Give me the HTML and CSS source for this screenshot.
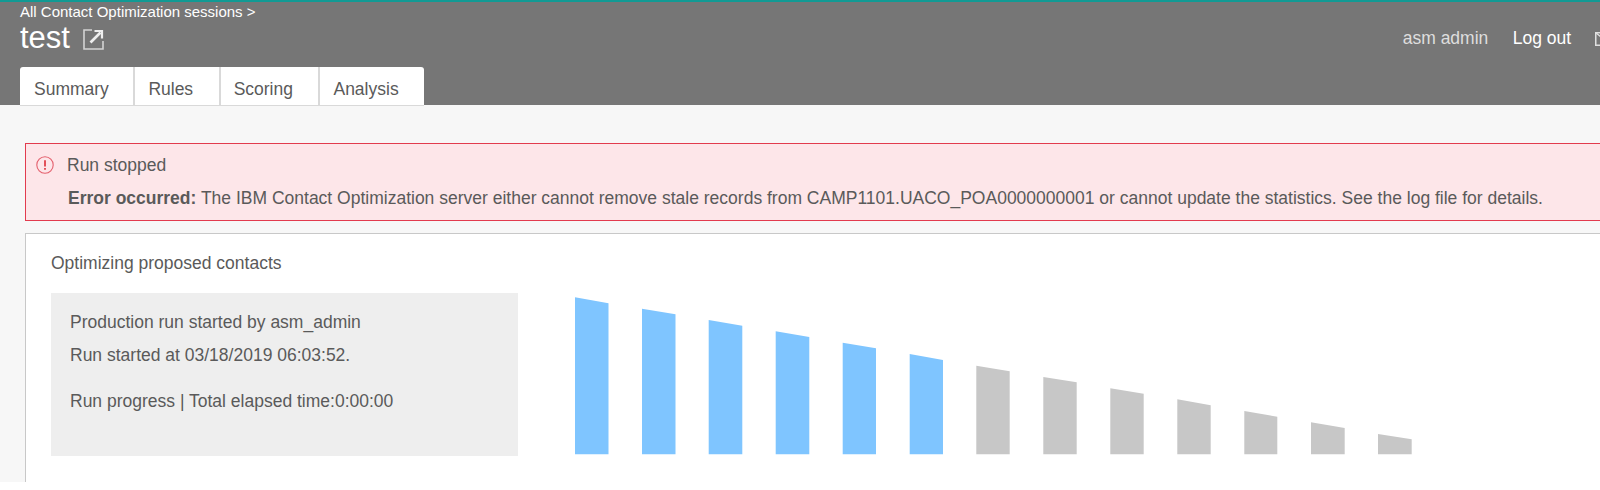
FILE: index.html
```html
<!DOCTYPE html>
<html lang="en">
<head>
<meta charset="utf-8">
<title>test</title>
<link rel="stylesheet" href="styles.css">
</head>
<body>
<header class="header">
  <div class="header-top">
    <div class="title-block">
      <a class="crumb">All Contact Optimization sessions &gt;</a>
      <div class="title-row">
        <h1 class="title">test</h1>
        <svg class="ext-icon" width="21" height="21" viewBox="0 0 21 21" fill="none" stroke="#d4d4d4">
          <path d="M9 1H1V20H20V12" stroke-width="1.6"/>
          <path d="M7.500 13.500L17.500 3.500" stroke="#eeeeee" stroke-width="2.6"/>
          <path d="M11.500 2H19V9.500" stroke="#eeeeee" stroke-width="2.200"/>
        </svg>
      </div>
    </div>
    <div class="user-block">
      <span class="user">asm admin</span>
      <a class="logout">Log out</a>
      <svg class="mail-icon" width="20" height="14" viewBox="0 0 20 14" fill="none" stroke="#e0e0e0" stroke-width="1.500">
        <rect x="0.750" y="0.750" width="18.500" height="12.500"/>
        <path d="M0.750 0.750L10 8L19.250 0.750"/>
      </svg>
    </div>
  </div>
  <nav class="tabs">
    <a class="tab">Summary</a>
    <a class="tab">Rules</a>
    <a class="tab">Scoring</a>
    <a class="tab">Analysis</a>
  </nav>
</header>
<main class="content">
  <section class="alert">
    <div class="alert-head">
      <svg class="alert-icon" width="18" height="18" viewBox="0 0 18 18" fill="none">
        <circle cx="9" cy="9" r="8.2" stroke="#e4606d" stroke-width="1.1"/>
        <path d="M9 4.200V10.600" stroke="#da1e28" stroke-width="1.500"/>
        <path d="M9 12V13.800" stroke="#da1e28" stroke-width="1.500"/>
      </svg>
      <span>Run stopped</span>
    </div>
    <p class="alert-body"><b>Error occurred:</b> The IBM Contact Optimization server either cannot remove stale records from CAMP1101.UACO_POA0000000001 or cannot update the statistics. See the log file for details.</p>
  </section>
  <section class="panel">
    <h2 class="panel-title">Optimizing proposed contacts</h2>
    <div class="panel-body">
      <div class="info">
        <p class="info-line">Production run started by asm_admin</p>
        <p class="info-line">Run started at 03/18/2019 06:03:52.</p>
        <p class="info-line progress">Run progress | Total elapsed time:0:00:00</p>
      </div>
      <svg class="chart" width="860" height="170" viewBox="0 0 860 170">
        <g fill="#7fc5ff">
          <polygon points="0,7.300 33.500,13.300 33.500,164.300 0,164.300"/>
          <polygon points="67,18.700 100.500,24.300 100.500,164.300 67,164.300"/>
          <polygon points="133.700,30 167.300,35.700 167.300,164.300 133.700,164.300"/>
          <polygon points="200.700,41.300 234.300,47 234.300,164.300 200.700,164.300"/>
          <polygon points="267.700,52.700 301,58.300 301,164.300 267.700,164.300"/>
          <polygon points="334.700,64 368,70 368,164.300 334.700,164.300"/>
        </g>
        <g fill="#c7c7c7">
          <polygon points="401.300,75.700 434.700,81.300 434.700,164.300 401.300,164.300"/>
          <polygon points="468.300,87 501.700,92.300 501.700,164.300 468.300,164.300"/>
          <polygon points="535.300,98.300 568.700,103.700 568.700,164.300 535.300,164.300"/>
          <polygon points="602.300,109.300 635.700,115.300 635.700,164.300 602.300,164.300"/>
          <polygon points="669.300,121 702.300,126.700 702.300,164.300 669.300,164.300"/>
          <polygon points="736,132.300 769.700,138 769.700,164.300 736,164.300"/>
          <polygon points="803,144 836.700,149.300 836.700,164.300 803,164.300"/>
        </g>
      </svg>
    </div>
  </section>
</main>
</body>
</html>
```
FILE: styles.css
```css
* { box-sizing: border-box; }
html, body { margin: 0; padding: 0; height: 100%; overflow: hidden; }
body {
  width: 1600px;
  background: #fff;
  font-family: "Liberation Sans", Arial, sans-serif;
  font-size: 17.500px;
  color: #5a5a5a;
}
p, h1, h2 { margin: 0; font-weight: normal; }

.header {
  height: 105px;
  background: #767676;
  border-top: 2px solid #119a94;
  padding-left: 20px;
  display: flex;
  flex-direction: column;
}
.header-top { display: flex; justify-content: space-between; height: 65px; flex: none; }
.title-block { display: flex; flex-direction: column; }
.crumb { color: #fff; font-size: 15px; line-height: 20px; }
.title-row { display: flex; align-items: center; gap: 13px; margin-top: -1px; }
.title { color: #fff; font-size: 31px; line-height: 34px; }
.ext-icon { margin-top: 2px; }
.user-block { display: flex; align-items: flex-start; width: 197.300px; flex: none; padding-top: 26px; line-height: 20px; white-space: nowrap; }
.user { color: #dedede; margin-right: 24.500px; }
.logout { color: #fff; margin-right: 23.500px; }
.mail-icon { margin-top: 4px; flex: none; }

.tabs { display: flex; position: relative; flex: none; }
.tab {
  height: 39px;
  padding: 12px 25.500px 0 13px;
  background: #fff;
  border-right: 2px solid #d9d9d9;
  border-bottom: 1px solid #d9d9d9;
  line-height: 20px;
  color: #5a5a5a;
}
.tab:first-child { padding-left: 14px; padding-right: 24.500px; border-top-left-radius: 3px; }
.tab:last-child { border-right: 0; border-top-right-radius: 3px; }

.content { height: 377px; overflow: hidden; background: #f7f7f7; padding: 38px 0 0 25px; }
.alert {
  height: 78px;
  background: #fde6e9;
  border: 1px solid #e23b4e;
  border-right: 0;
  padding: 10px 0 0 10px;
  margin-bottom: 12px;
}
.alert-head { display: flex; align-items: center; gap: 13px; line-height: 22px; }
.alert-icon { flex: none; }
.alert-body { padding: 11px 0 0 32px; line-height: 22px; white-space: nowrap; }
.alert-body b { font-weight: bold; }

.panel {
  height: 260px;
  background: #fff;
  border: 1px solid #c8c8c8;
  border-right: 0;
  padding: 18px 0 0 25px;
}
.panel-title { font-size: 17.500px; line-height: 22px; margin-bottom: 19px; }
.panel-body { display: flex; gap: 57px; align-items: flex-start; }
.info { width: 467px; height: 163px; background: #eeeeee; padding: 18px 0 0 19px; flex: none; }
.info-line { line-height: 22px; margin-bottom: 11px; }
.info-line.progress { margin-top: 24px; }
.chart { flex: none; margin-top: -3px; display: block; }
```
